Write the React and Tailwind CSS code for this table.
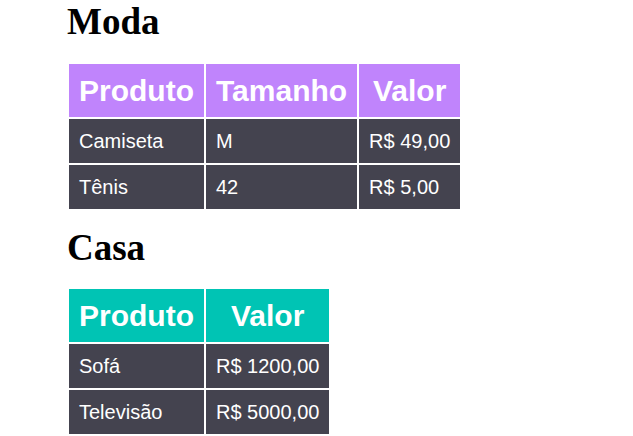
export default function App() {
  const th = "bg-[#c084fc] text-white font-bold text-[30px] leading-[33px] px-[10px] py-[10px] text-center";
  const th2 = "bg-[#00c4b4] text-white font-bold text-[30px] leading-[33px] px-[10px] py-[10px] text-center";
  const td = "bg-[#44434f] text-white text-[20px] leading-[24px] px-[10px] py-[10px] text-left";
  const serif = { fontFamily: '"Liberation Serif", serif' };
  return (
    <div className="min-h-[436px] bg-white pl-[67px] pt-[1px]" style={{ fontFamily: '"Liberation Sans", Arial, sans-serif' }}>
      <h2 className="text-[37px] font-bold leading-[42px] text-black" style={serif}>Moda</h2>
      <table className="mt-[19px] border-separate border-spacing-[2px]">
        <thead>
          <tr>
            <th className={th}>Produto</th>
            <th className={th}>Tamanho</th>
            <th className={th}>Valor</th>
          </tr>
        </thead>
        <tbody>
          <tr>
            <td className={td}>Camiseta</td>
            <td className={td}>M</td>
            <td className={td}>R$ 49,00</td>
          </tr>
          <tr>
            <td className={td}>Tênis</td>
            <td className={td}>42</td>
            <td className={td}>R$ 5,00</td>
          </tr>
        </tbody>
      </table>
      <h2 className="mt-[16px] text-[37px] font-bold leading-[42px] text-black" style={serif}>Casa</h2>
      <table className="mt-[18px] border-separate border-spacing-[2px]">
        <thead>
          <tr>
            <th className={th2}>Produto</th>
            <th className={th2}>Valor</th>
          </tr>
        </thead>
        <tbody>
          <tr>
            <td className={td}>Sofá</td>
            <td className={td}>R$ 1200,00</td>
          </tr>
          <tr>
            <td className={td}>Televisão</td>
            <td className={td}>R$ 5000,00</td>
          </tr>
        </tbody>
      </table>
    </div>
  );
}
